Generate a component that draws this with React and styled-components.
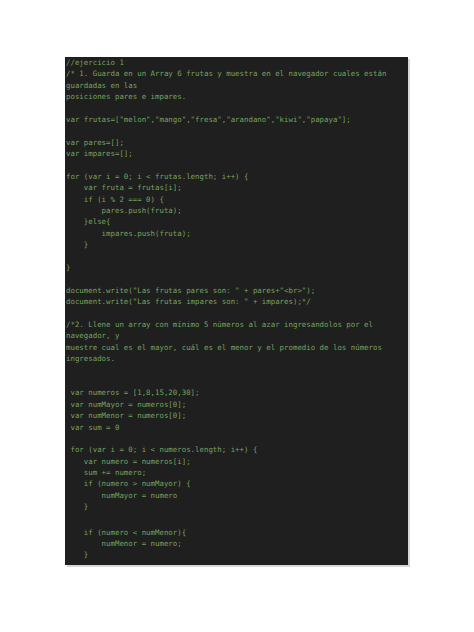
import styled, { createGlobalStyle } from "styled-components";

const GlobalStyle = createGlobalStyle`
  html, body {
    margin: 0;
    padding: 0;
    background: #ffffff;
  }
`;

const Page = styled.div`
  width: 474px;
  height: 632px;
  padding: 57px 0 0 65px;
  box-sizing: border-box;
`;

const CodeBlock = styled.div`
  width: 343px;
  height: 508px;
  box-sizing: border-box;
  padding: 0 0 0 1px;
  background: #1f1f1f;
  box-shadow: 2px 2px 0 #d8d8d8;
  overflow: hidden;
  display: flex;
  flex-direction: column;
`;

const Line = styled.div`
  height: ${(p) => p.$h || 11.4}px;
  flex-shrink: 0;
  line-height: 11.4px;
  white-space: pre;
  font-family: "DejaVu Sans Mono", "Liberation Mono", monospace;
  font-size: 7.4px;
  color: #74a35e;
`;

const lines = [
  "//ejercicio 1",
  "/* 1. Guarda en un Array 6 frutas y muestra en el navegador cuales están",
  "guardadas en las",
  "posiciones pares e impares.",
  "",
  'var frutas=["melon","mango","fresa","arandano","kiwi","papaya"];',
  "",
  "var pares=[];",
  "var impares=[];",
  "",
  "for (var i = 0; i < frutas.length; i++) {",
  "    var fruta = frutas[i];",
  "    if (i % 2 === 0) {",
  "        pares.push(fruta);",
  "    }else{",
  "        impares.push(fruta);",
  "    }",
  "",
  "}",
  "",
  'document.write("Las frutas pares son: " + pares+"<br>");',
  'document.write("Las frutas impares son: " + impares);*/',
  "",
  "/*2. Llene un array con mínimo 5 números al azar ingresandolos por el",
  "navegador, y",
  "muestre cual es el mayor, cuál es el menor y el promedio de los números",
  "ingresados.",
  "",
  "",
  " var numeros = [1,8,15,20,30];",
  " var numMayor = numeros[0];",
  " var numMenor = numeros[0];",
  " var sum = 0",
  "",
  " for (var i = 0; i < numeros.length; i++) {",
  "    var numero = numeros[i];",
  "    sum += numero;",
  "    if (numero > numMayor) {",
  "        numMayor = numero",
  "    }",
  ["", 14],
  "    if (numero < numMenor){",
  "        numMenor = numero;",
  "    }",
];

export default function App() {
  return (
    <>
      <GlobalStyle />
      <Page>
        <CodeBlock>
          {lines.map((entry, i) => {
            const [text, h] = Array.isArray(entry) ? entry : [entry];
            return (
              <Line key={i} $h={h}>
                {text || " "}
              </Line>
            );
          })}
        </CodeBlock>
      </Page>
    </>
  );
}
